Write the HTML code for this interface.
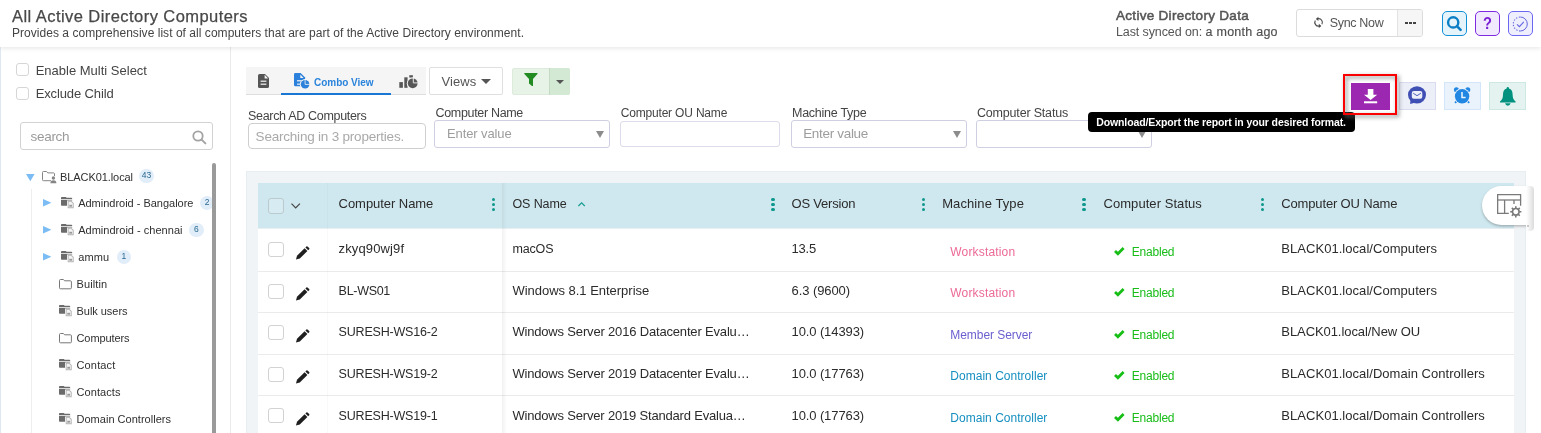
<!DOCTYPE html>
<html>
<head>
<meta charset="utf-8">
<title>All Active Directory Computers</title>
<style>
*{box-sizing:border-box;margin:0;padding:0}
html,body{width:1541px;height:433px;overflow:hidden;background:#fff;font-family:"Liberation Sans",sans-serif;color:#333}
.t,.q{position:absolute;white-space:nowrap;line-height:1}
#tx{position:absolute;left:0;top:0;width:1541px;height:433px;will-change:opacity;z-index:30}
.a{position:absolute}
svg{position:absolute;overflow:visible}
#hdr{position:absolute;left:0;top:0;width:1541px;height:47px;background:#fff;box-shadow:0 1px 5px rgba(0,0,0,.11);z-index:5}
#side{position:absolute;left:0;top:47px;width:231px;height:386px;background:#fff;border-right:1px solid #e9eaeb;border-left:1px solid #dfe8f0}
.cb{position:absolute;width:13px;height:13px;border:1.5px solid #d6d6d6;border-radius:3px;background:#fff}
.bd{position:absolute;width:14.4px;height:14.4px;border-radius:8px;background:#e1edf9;color:#2a6890;font-size:8.5px;line-height:13.6px;text-align:center;z-index:2;will-change:opacity}
.inp{position:absolute;border:1px solid #cfcfe2;border-radius:3px;background:#fff}
.dd{position:absolute;width:0;height:0;border-left:4.3px solid transparent;border-right:4.3px solid transparent;border-top:7px solid #8c8c8c}
.row{position:absolute;left:258px;width:1256px;border-top:1px solid #ebebeb}
.rcb{position:absolute;left:268px;width:16px;height:15px;border:1px solid #d2d2d2;border-radius:3px;background:#fff;z-index:3}
.dots{position:absolute;width:3px;height:13px;z-index:3}
.dots i{position:absolute;left:-0.2px;width:3.4px;height:3.4px;border-radius:1.7px;background:#0d978b}
</style>
</head>
<body>
<div id="hdr"></div>
<div id="side"></div>
<!-- header controls -->
<div class="a" style="left:1296px;top:9px;width:127px;height:28px;border:1px solid #dcdcdc;border-radius:3px;background:#fff;z-index:6"></div>
<div class="a" style="left:1397px;top:10px;width:25px;height:26px;border-left:1px solid #e2e2e2;background:#f6f6f6;border-radius:0 2px 2px 0;z-index:6"></div>
<div class="a" style="left:1405px;top:22px;width:11px;height:2px;z-index:7"><i class="a" style="left:0;top:0;width:2.6px;height:2.2px;background:#444"></i><i class="a" style="left:4px;top:0;width:2.6px;height:2.2px;background:#444"></i><i class="a" style="left:8px;top:0;width:2.6px;height:2.2px;background:#444"></i></div>
<div class="a" style="left:1442px;top:11px;width:25px;height:25px;border:1px solid #1190d6;border-radius:5px;background:#e5f3fb;z-index:6"></div>
<div class="a" style="left:1475px;top:11px;width:25px;height:25px;border:1px solid #7f29e0;border-radius:5px;background:#f1e9fd;z-index:6"></div>
<div class="a" style="left:1508px;top:11px;width:25px;height:25px;border:1px solid #6c66f2;border-radius:5px;background:#efeefd;z-index:6"></div>
<!-- sidebar -->
<div class="cb" style="left:16px;top:63px"></div>
<div class="cb" style="left:16px;top:87px"></div>
<div class="a" style="left:20px;top:122px;width:193px;height:28px;border:1px solid #d2d2d2;border-radius:3px;background:#fff"></div>
<div class="a" style="left:30.5px;top:189px;width:1px;height:244px;background:#eeeeee"></div>
<div class="a" style="left:212.2px;top:163px;width:3.8px;height:275px;background:#9a9a9a;border-radius:2px;z-index:4"></div>
<div class="bd" style="left:139.4px;top:169px">43</div>
<div class="bd" style="left:200px;top:195.8px">2</div>
<div class="bd" style="left:189.2px;top:222.8px">6</div>
<div class="bd" style="left:116.6px;top:249.8px">1</div>
<!-- toolbar -->
<div class="a" style="left:246px;top:67px;width:180px;height:28px;background:#f5f5f5;border-bottom:1px solid #dedede"></div>
<div class="a" style="left:281px;top:93px;width:110px;height:2px;background:#1976d2"></div>
<div class="a" style="left:429px;top:67px;width:74px;height:28px;border:1px solid #dfdfdf;border-radius:2px;background:#fff"></div>
<div class="a" style="left:481px;top:79.3px;width:0;height:0;border-left:5px solid transparent;border-right:5px solid transparent;border-top:5px solid #555"></div>
<div class="a" style="left:512px;top:68px;width:58px;height:27px;background:#e8f3e8;border-radius:2px;border:1px solid #dcebdc"></div>
<div class="a" style="left:549px;top:68px;width:21px;height:27px;background:#d3e9d3;border-left:1px solid #c2dbc2;border-radius:0 2px 2px 0"></div>
<div class="a" style="left:556px;top:80px;width:0;height:0;border-left:4px solid transparent;border-right:4px solid transparent;border-top:4.5px solid #555"></div>
<!-- filter inputs -->
<div class="inp" style="left:248px;top:123px;width:178px;height:26px;border-color:#cfcfcf;border-radius:4px"></div>
<div class="inp" style="left:434px;top:120px;width:176px;height:28px"></div><div class="dd" style="left:595.6px;top:131px"></div>
<div class="inp" style="left:620px;top:120.5px;width:159.5px;height:26.5px;border-color:#dcdcea"></div>
<div class="inp" style="left:791px;top:120px;width:176px;height:28px"></div><div class="dd" style="left:952.6px;top:131px"></div>
<div class="inp" style="left:976px;top:120px;width:176px;height:28px"></div><div class="dd" style="left:1137.6px;top:131px"></div>
<!-- action buttons -->
<div class="a" style="left:1343px;top:74px;width:54px;height:41px;border:2px solid #fa0000;filter:drop-shadow(2px 2px 2px rgba(110,116,114,.9));z-index:25"></div>
<div class="a" style="left:1351px;top:83px;width:39px;height:27px;background:#9c27b0;z-index:9"></div>
<div class="a" style="left:1398.5px;top:82px;width:37px;height:27.5px;background:#eceef8;border:1px solid #d9dbf0;z-index:7"></div>
<div class="a" style="left:1444px;top:82px;width:37px;height:27.5px;background:#eaf3fc;border:1px solid #d3e5f8"></div>
<div class="a" style="left:1489px;top:82px;width:37px;height:27.5px;background:#e5f3f0;border:1px solid #cde8e2"></div>
<!-- tooltip -->
<div class="a" style="left:1088px;top:112px;width:267px;height:20px;background:#000;border-radius:4px;z-index:19"></div>
<!-- table -->
<div class="a" style="left:246px;top:171px;width:1280px;height:262px;background:#f0f4f7;border:1px solid #e7eef2;border-bottom:0"></div>
<div class="a" style="left:258px;top:183px;width:1256px;height:250px;background:#fff"></div>
<div class="a" style="left:258px;top:183px;width:1256px;height:44.5px;background:#cfe8ef;z-index:2"></div>
<div class="a" style="left:258px;top:227.5px;width:1256px;height:1.5px;background:#e7eef1;z-index:2"></div>
<div class="row" style="top:271px;height:1px"></div>
<div class="row" style="top:312px;height:1px"></div>
<div class="row" style="top:354px;height:1px"></div>
<div class="row" style="top:395px;height:1px"></div>
<div class="a" style="left:502px;top:183px;width:5px;height:250px;background:linear-gradient(to right,rgba(0,0,0,.055),rgba(0,0,0,.03) 40%,rgba(0,0,0,0));z-index:3"></div>
<div class="a" style="left:326.5px;top:183px;width:1px;height:250px;background:rgba(0,0,0,.022);z-index:3"></div>
<div class="rcb" style="top:198.3px;height:15.5px;background:#d6ecf2;border:1.5px solid #bcc9cd"></div>
<div class="rcb" style="top:242.4px"></div>
<div class="rcb" style="top:283.9px"></div>
<div class="rcb" style="top:325.4px"></div>
<div class="rcb" style="top:366.9px"></div>
<div class="rcb" style="top:408.4px"></div>
<div class="dots" style="left:492px;top:198px"><i style="top:0"></i><i style="top:4.8px"></i><i style="top:9.6px"></i></div>
<div class="dots" style="left:771.3px;top:198px"><i style="top:0"></i><i style="top:4.8px"></i><i style="top:9.6px"></i></div>
<div class="dots" style="left:921.8px;top:198px"><i style="top:0"></i><i style="top:4.8px"></i><i style="top:9.6px"></i></div>
<div class="dots" style="left:1082.5px;top:198px"><i style="top:0"></i><i style="top:4.8px"></i><i style="top:9.6px"></i></div>
<div class="dots" style="left:1261px;top:198px"><i style="top:0"></i><i style="top:4.8px"></i><i style="top:9.6px"></i></div>
<!-- column settings pill -->

<div class="a" style="left:1481.7px;top:185.6px;width:46px;height:39px;background:#fff;border-radius:19.5px 0 0 19.5px;box-shadow:0 1.5px 2.5px rgba(0,0,0,.25);z-index:4"></div>
<div class="a" style="left:1526px;top:185.6px;width:7.8px;height:45px;background:linear-gradient(to right,#fff 0%,#f4f4f4 35%,#dcdcdc 100%);border-radius:0 4px 4px 0;z-index:4"></div>
<div class="a" style="left:1526.8px;top:224.6px;width:2.6px;height:2.6px;border-radius:2px;background:#b9b9b9;z-index:5"></div>
<!-- ICONS -->
<!-- sync icon -->
<svg style="left:1313px;top:16px;z-index:7" width="12" height="13" viewBox="0 0 12 13"><g fill="none" stroke="#4a4a4a" stroke-width="1.15"><path d="M4.9 2.7 A3.8 3.8 0 0 1 8.9 8.3"/><path d="M6.3 10.1 A3.8 3.8 0 0 1 2.3 4.5"/></g><path d="M2.8 2.9 L5.4 0.8 V4.9Z" fill="#4a4a4a"/><path d="M8.4 9.9 L5.8 7.8 V12Z" fill="#4a4a4a"/></svg>
<!-- header magnifier -->
<svg style="left:1445px;top:14px;z-index:7" width="18" height="18" viewBox="0 0 18 18"><circle cx="8.2" cy="8.4" r="5.1" fill="none" stroke="#0b7fc6" stroke-width="2.4"/><path d="M11.9 12.2 L15.6 15.9" stroke="#0b7fc6" stroke-width="2.6" stroke-linecap="round"/></svg>
<!-- check circle -->
<svg style="left:1512px;top:16px;z-index:7" width="16" height="16" viewBox="0 0 16 16"><path d="M8.3 1 A7 7 0 0 1 8.3 15" fill="none" stroke="#6466e0" stroke-width="1"/><path d="M8.3 15 A7 7 0 0 1 8.3 1" fill="none" stroke="#6466e0" stroke-width="1.1" stroke-dasharray="1.3 1.6"/><path d="M5 8.3 L7.4 10.6 L11.8 5.8" fill="none" stroke="#6466e0" stroke-width="1.1"/></svg>
<!-- sidebar magnifier -->
<svg style="left:191.5px;top:129.5px" width="15" height="15" viewBox="0 0 15 15"><circle cx="6" cy="6" r="4.7" fill="none" stroke="#a3a3a3" stroke-width="1.8"/><path d="M9.6 9.6 L13.4 13.4" stroke="#a3a3a3" stroke-width="2" stroke-linecap="round"/></svg>
<!-- toolbar doc icon -->
<svg style="left:258px;top:74px" width="11" height="14" viewBox="0 0 11 14"><path d="M1.6 0 H7 L11 4 V12.4 Q11 14 9.4 14 H1.6 Q0 14 0 12.4 V1.6 Q0 0 1.6 0Z" fill="#555"/><path d="M6.6 0.8 V4.4 H10.2Z" fill="#f5f5f5"/><rect x="2.6" y="6.6" width="5.8" height="1.2" fill="#f5f5f5"/><rect x="2.6" y="9.6" width="5.8" height="1.2" fill="#f5f5f5"/></svg>
<!-- combo icon -->
<svg style="left:294px;top:73px" width="16" height="16" viewBox="0 0 16 16"><path d="M1.4 0 H6.6 L11.1 4.5 V13.3 H1.4 Q0 13.3 0 11.9 V1.4 Q0 0 1.4 0Z" fill="#2a80da"/><path d="M6.3 1.6 V4.9 H9.6Z" fill="#f5f5f5"/><rect x="3" y="7.2" width="4.6" height="1.2" fill="#f5f5f5"/><rect x="3" y="10.6" width="3" height="1.1" fill="#f5f5f5"/><circle cx="11.1" cy="11.2" r="5.3" fill="#f5f5f5"/><circle cx="11.1" cy="11.2" r="4.3" fill="#2a80da"/><path d="M11.1 6 V11.4 H16" fill="none" stroke="#f5f5f5" stroke-width="0.8"/></svg>
<!-- chart icon -->
<svg style="left:399px;top:75px" width="19" height="14" viewBox="0 0 19 14"><rect x="0.3" y="7.1" width="3.6" height="5.7" fill="#585858"/><rect x="5.3" y="2.3" width="3.3" height="10.5" fill="#585858"/><rect x="10.3" y="0.2" width="3.6" height="2.4" fill="#585858"/><circle cx="13.7" cy="8.3" r="5.9" fill="#f5f5f5"/><circle cx="13.7" cy="8.3" r="4.9" fill="#585858"/><path d="M14.3 2.5 V7.9 H19.3" fill="none" stroke="#f5f5f5" stroke-width="0.9"/></svg>
<!-- funnel -->
<svg style="left:524px;top:73.4px" width="14" height="13" viewBox="0 0 14 13"><path d="M0.6 0 H13.2 Q14 0.4 13.4 1.1 L9 6 V13 H8 L5 10.6 V6 L0.4 1.1 Q-0.2 0.4 0.6 0Z" fill="#228b22"/></svg>
<!-- download icon -->
<svg style="left:1363.8px;top:88.8px;z-index:10" width="13.2" height="14.4" viewBox="0 0 13.2 14.4"><path d="M3.8 0 H9.4 V5.8 H13.2 L6.6 11 L0 5.8 H3.8Z" fill="#fff"/><rect x="0" y="12.3" width="13.2" height="2" fill="#fff"/></svg>
<!-- chat icon -->
<svg style="left:1408px;top:85px;z-index:8" width="19" height="20" viewBox="0 0 19 20"><ellipse cx="9" cy="9.8" rx="9" ry="8.6" fill="#3f4fb4"/><path d="M2.6 14 L2.1 19 L7.4 17.4Z" fill="#3f4fb4"/><rect x="3.8" y="5.9" width="10.5" height="7.8" rx="2" fill="#eceef8"/><path d="M5.2 8.2 L9 10.7 L12.9 8.2" fill="none" stroke="#3f4fb4" stroke-width="0.9"/></svg>
<!-- alarm icon -->
<svg style="left:1453px;top:86px" width="18" height="18" viewBox="0 0 18 18"><circle cx="3.4" cy="3.8" r="2.5" fill="#2187e2"/><circle cx="14.8" cy="3.8" r="2.5" fill="#2187e2"/><path d="M3.6 15.2 L2.6 16.3 M14.6 15.2 L15.6 16.3" stroke="#2187e2" stroke-width="2" stroke-linecap="round"/><circle cx="9.1" cy="10.3" r="8.1" fill="#eaf3fc"/><circle cx="9.1" cy="10.3" r="7.2" fill="#2187e2"/><path d="M9 6 V11.4 H12.6" fill="none" stroke="#eef6fd" stroke-width="1.5"/></svg>
<!-- bell icon -->
<svg style="left:1499.8px;top:86.6px" width="16" height="19" viewBox="0 0 16 19"><path d="M7.8 0 Q9 0 9 1.4 Q12.6 2.6 12.6 7.4 Q12.6 12.2 15.6 14.4 V15.4 H0 V14.4 Q3 12.2 3 7.4 Q3 2.6 6.6 1.4 Q6.6 0 7.8 0Z" fill="#00917f"/><path d="M5 16.3 H10.6 Q10 18.7 7.8 18.7 Q5.6 18.7 5 16.3Z" fill="#00917f"/></svg>
<!-- tooltip arrow none -->
<!-- tree icons -->
<svg style="left:26.4px;top:174.2px" width="8.6" height="7.2" viewBox="0 0 8.6 7.2"><path d="M0 0 H8.6 L4.3 7.2Z" fill="#7bbcf5"/></svg>
<svg style="left:43.4px;top:199.2px" width="8.4" height="7.6" viewBox="0 0 8.4 7.6"><path d="M0 0 L8.4 3.8 L0 7.6Z" fill="#7bbcf5"/></svg>
<svg style="left:43.4px;top:226.2px" width="8.4" height="7.6" viewBox="0 0 8.4 7.6"><path d="M0 0 L8.4 3.8 L0 7.6Z" fill="#7bbcf5"/></svg>
<svg style="left:43.4px;top:253.2px" width="8.4" height="7.6" viewBox="0 0 8.4 7.6"><path d="M0 0 L8.4 3.8 L0 7.6Z" fill="#7bbcf5"/></svg>
<!-- root folder/person icon -->
<svg style="left:42px;top:171px" width="15" height="13" viewBox="0 0 15 13"><path d="M9 9.7 H1.4 Q0.5 9.7 0.5 8.8 V1.4 Q0.5 0.5 1.4 0.5 H4.6 L5.8 1.9 H11.6 Q12.5 1.9 12.5 2.8 V5" fill="none" stroke="#858585" stroke-width="1"/><circle cx="11.4" cy="7" r="1.7" fill="#858585"/><path d="M8.4 12.2 Q8.4 9.3 11.4 9.3 Q14.4 9.3 14.4 12.2Z" fill="#858585"/></svg>
<svg style="left:61px;top:197.3px" width="13" height="12" viewBox="0 0 13 12"><path d="M0.8 0 H4.8 L5.6 0.8 H10.4 Q11.2 0.8 11.2 1.6 V1.9 H0 V0.8 Q0 0 0.8 0Z" fill="#6b6b6b"/><path d="M0 2.7 H11.2 V3.4 H6 V8.8 H0.8 Q0 8.8 0 8Z" fill="#6b6b6b"/><path d="M6.7 3.9 H10.5 L12.7 6.1 V11.2 H6.7Z" fill="#b2b2b2"/><path d="M7.6 4.8 H10 L11.8 6.6 V10.3 H7.6Z" fill="#f4f4f4"/><rect x="8.3" y="7.8" width="2.8" height="1.9" fill="#9a9a9a"/></svg>
<svg style="left:61px;top:224.3px" width="13" height="12" viewBox="0 0 13 12"><path d="M0.8 0 H4.8 L5.6 0.8 H10.4 Q11.2 0.8 11.2 1.6 V1.9 H0 V0.8 Q0 0 0.8 0Z" fill="#6b6b6b"/><path d="M0 2.7 H11.2 V3.4 H6 V8.8 H0.8 Q0 8.8 0 8Z" fill="#6b6b6b"/><path d="M6.7 3.9 H10.5 L12.7 6.1 V11.2 H6.7Z" fill="#b2b2b2"/><path d="M7.6 4.8 H10 L11.8 6.6 V10.3 H7.6Z" fill="#f4f4f4"/><rect x="8.3" y="7.8" width="2.8" height="1.9" fill="#9a9a9a"/></svg>
<svg style="left:61px;top:251.3px" width="13" height="12" viewBox="0 0 13 12"><path d="M0.8 0 H4.8 L5.6 0.8 H10.4 Q11.2 0.8 11.2 1.6 V1.9 H0 V0.8 Q0 0 0.8 0Z" fill="#6b6b6b"/><path d="M0 2.7 H11.2 V3.4 H6 V8.8 H0.8 Q0 8.8 0 8Z" fill="#6b6b6b"/><path d="M6.7 3.9 H10.5 L12.7 6.1 V11.2 H6.7Z" fill="#b2b2b2"/><path d="M7.6 4.8 H10 L11.8 6.6 V10.3 H7.6Z" fill="#f4f4f4"/><rect x="8.3" y="7.8" width="2.8" height="1.9" fill="#9a9a9a"/></svg>
<svg style="left:58.8px;top:278.6px" width="13" height="11" viewBox="0 0 13 11"><path d="M1.5 0.5 H4.4 L5.6 1.8 H11.4 Q12.4 1.8 12.4 2.8 V8.8 Q12.4 9.8 11.4 9.8 H1.5 Q0.5 9.8 0.5 8.8 V1.5 Q0.5 0.5 1.5 0.5Z" fill="none" stroke="#777" stroke-width="1"/></svg>
<svg style="left:58.8px;top:305.0px" width="13" height="12" viewBox="0 0 13 12"><path d="M0.8 0 H4.8 L5.6 0.8 H10.4 Q11.2 0.8 11.2 1.6 V1.9 H0 V0.8 Q0 0 0.8 0Z" fill="#6b6b6b"/><path d="M0 2.7 H11.2 V3.4 H6 V8.8 H0.8 Q0 8.8 0 8Z" fill="#6b6b6b"/><path d="M6.7 3.9 H10.5 L12.7 6.1 V11.2 H6.7Z" fill="#b2b2b2"/><path d="M7.6 4.8 H10 L11.8 6.6 V10.3 H7.6Z" fill="#f4f4f4"/><rect x="8.3" y="7.8" width="2.8" height="1.9" fill="#9a9a9a"/></svg>
<svg style="left:58.8px;top:332.6px" width="13" height="11" viewBox="0 0 13 11"><path d="M1.5 0.5 H4.4 L5.6 1.8 H11.4 Q12.4 1.8 12.4 2.8 V8.8 Q12.4 9.8 11.4 9.8 H1.5 Q0.5 9.8 0.5 8.8 V1.5 Q0.5 0.5 1.5 0.5Z" fill="none" stroke="#777" stroke-width="1"/></svg>
<svg style="left:58.8px;top:359.0px" width="13" height="12" viewBox="0 0 13 12"><path d="M0.8 0 H4.8 L5.6 0.8 H10.4 Q11.2 0.8 11.2 1.6 V1.9 H0 V0.8 Q0 0 0.8 0Z" fill="#6b6b6b"/><path d="M0 2.7 H11.2 V3.4 H6 V8.8 H0.8 Q0 8.8 0 8Z" fill="#6b6b6b"/><path d="M6.7 3.9 H10.5 L12.7 6.1 V11.2 H6.7Z" fill="#b2b2b2"/><path d="M7.6 4.8 H10 L11.8 6.6 V10.3 H7.6Z" fill="#f4f4f4"/><rect x="8.3" y="7.8" width="2.8" height="1.9" fill="#9a9a9a"/></svg>
<svg style="left:58.8px;top:386.0px" width="13" height="12" viewBox="0 0 13 12"><path d="M0.8 0 H4.8 L5.6 0.8 H10.4 Q11.2 0.8 11.2 1.6 V1.9 H0 V0.8 Q0 0 0.8 0Z" fill="#6b6b6b"/><path d="M0 2.7 H11.2 V3.4 H6 V8.8 H0.8 Q0 8.8 0 8Z" fill="#6b6b6b"/><path d="M6.7 3.9 H10.5 L12.7 6.1 V11.2 H6.7Z" fill="#b2b2b2"/><path d="M7.6 4.8 H10 L11.8 6.6 V10.3 H7.6Z" fill="#f4f4f4"/><rect x="8.3" y="7.8" width="2.8" height="1.9" fill="#9a9a9a"/></svg>
<svg style="left:58.8px;top:413.0px" width="13" height="12" viewBox="0 0 13 12"><path d="M0.8 0 H4.8 L5.6 0.8 H10.4 Q11.2 0.8 11.2 1.6 V1.9 H0 V0.8 Q0 0 0.8 0Z" fill="#6b6b6b"/><path d="M0 2.7 H11.2 V3.4 H6 V8.8 H0.8 Q0 8.8 0 8Z" fill="#6b6b6b"/><path d="M6.7 3.9 H10.5 L12.7 6.1 V11.2 H6.7Z" fill="#b2b2b2"/><path d="M7.6 4.8 H10 L11.8 6.6 V10.3 H7.6Z" fill="#f4f4f4"/><rect x="8.3" y="7.8" width="2.8" height="1.9" fill="#9a9a9a"/></svg>
<svg style="left:291px;top:203px;z-index:3" width="9.4" height="6" viewBox="0 0 9.4 6"><path d="M0.5 0.6 L4.7 5 L8.9 0.6" fill="none" stroke="#444" stroke-width="1.2"/></svg>
<svg style="left:577.6px;top:202px;z-index:3" width="7.2" height="4.4" viewBox="0 0 7.2 4.4"><path d="M0.4 4 L3.6 0.8 L6.8 4" fill="none" stroke="#159b8f" stroke-width="1.2"/></svg>
<svg style="left:1497px;top:194px;z-index:5" width="25" height="24" viewBox="0 0 25 24"><g fill="none" stroke="#7a7a7a" stroke-width="1.3"><path d="M11.8 19.4 H0.65 V0.65 H23.6 V11.8"/><path d="M0.65 6 H23.6"/><path d="M7.6 6 V19.4"/><path d="M17 6 V10"/></g><g transform="translate(18.8,17.8)"><circle r="3.3" fill="none" stroke="#7a7a7a" stroke-width="1.7"/><g stroke="#7a7a7a" stroke-width="1.6"><path d="M0 -3.6 V-5.6M0 3.6 V5.6M-3.6 0 H-5.6M3.6 0 H5.6M2.55 2.55 L3.95 3.95M-2.55 2.55 L-3.95 3.95M2.55 -2.55 L3.95 -3.95M-2.55 -2.55 L-3.95 -3.95"/></g></g></svg>
<svg style="left:295.6px;top:245.8px;z-index:3" width="14" height="14" viewBox="0 0 14 14"><path d="M0 13.6 L1 9.8 L8.6 2.2 L11.4 5 L3.8 12.6Z" fill="#1f1f1f"/><path d="M9.4 1.4 L10.4 0.4 Q10.9 -0.1 11.5 0.4 L13.2 2.1 Q13.7 2.7 13.2 3.2 L12.2 4.2Z" fill="#1f1f1f"/></svg>
<svg style="left:1113.6px;top:246.9px" width="10.6" height="8.2" viewBox="0 0 10.6 8.2"><path d="M1 4 L3.9 6.7 L9.6 1" fill="none" stroke="#16be16" stroke-width="2.8"/></svg>
<svg style="left:295.6px;top:287.3px;z-index:3" width="14" height="14" viewBox="0 0 14 14"><path d="M0 13.6 L1 9.8 L8.6 2.2 L11.4 5 L3.8 12.6Z" fill="#1f1f1f"/><path d="M9.4 1.4 L10.4 0.4 Q10.9 -0.1 11.5 0.4 L13.2 2.1 Q13.7 2.7 13.2 3.2 L12.2 4.2Z" fill="#1f1f1f"/></svg>
<svg style="left:1113.6px;top:288.4px" width="10.6" height="8.2" viewBox="0 0 10.6 8.2"><path d="M1 4 L3.9 6.7 L9.6 1" fill="none" stroke="#16be16" stroke-width="2.8"/></svg>
<svg style="left:295.6px;top:328.8px;z-index:3" width="14" height="14" viewBox="0 0 14 14"><path d="M0 13.6 L1 9.8 L8.6 2.2 L11.4 5 L3.8 12.6Z" fill="#1f1f1f"/><path d="M9.4 1.4 L10.4 0.4 Q10.9 -0.1 11.5 0.4 L13.2 2.1 Q13.7 2.7 13.2 3.2 L12.2 4.2Z" fill="#1f1f1f"/></svg>
<svg style="left:1113.6px;top:329.9px" width="10.6" height="8.2" viewBox="0 0 10.6 8.2"><path d="M1 4 L3.9 6.7 L9.6 1" fill="none" stroke="#16be16" stroke-width="2.8"/></svg>
<svg style="left:295.6px;top:370.3px;z-index:3" width="14" height="14" viewBox="0 0 14 14"><path d="M0 13.6 L1 9.8 L8.6 2.2 L11.4 5 L3.8 12.6Z" fill="#1f1f1f"/><path d="M9.4 1.4 L10.4 0.4 Q10.9 -0.1 11.5 0.4 L13.2 2.1 Q13.7 2.7 13.2 3.2 L12.2 4.2Z" fill="#1f1f1f"/></svg>
<svg style="left:1113.6px;top:371.4px" width="10.6" height="8.2" viewBox="0 0 10.6 8.2"><path d="M1 4 L3.9 6.7 L9.6 1" fill="none" stroke="#16be16" stroke-width="2.8"/></svg>
<svg style="left:295.6px;top:411.8px;z-index:3" width="14" height="14" viewBox="0 0 14 14"><path d="M0 13.6 L1 9.8 L8.6 2.2 L11.4 5 L3.8 12.6Z" fill="#1f1f1f"/><path d="M9.4 1.4 L10.4 0.4 Q10.9 -0.1 11.5 0.4 L13.2 2.1 Q13.7 2.7 13.2 3.2 L12.2 4.2Z" fill="#1f1f1f"/></svg>
<svg style="left:1113.6px;top:412.9px" width="10.6" height="8.2" viewBox="0 0 10.6 8.2"><path d="M1 4 L3.9 6.7 L9.6 1" fill="none" stroke="#16be16" stroke-width="2.8"/></svg>

<div id="tx"><span class="t" style="left:12.00px;top:8.00px;font-size:16.5px;color:#484848;z-index:6;-webkit-text-stroke:0.25px #484848;letter-spacing:0.439px;">All Active Directory Computers</span>
<span class="t" style="left:12.00px;top:27.00px;font-size:12px;color:#444;z-index:6;letter-spacing:0.039px;">Provides a comprehensive list of all computers that are part of the Active Directory environment.</span>
<span class="t" style="left:1116.00px;top:9.00px;font-size:13.5px;color:#555;z-index:6;-webkit-text-stroke:0.5px #555;letter-spacing:0.295px;">Active Directory Data</span>
<span class="t" style="left:1116.00px;top:26.00px;font-size:12.5px;color:#555;z-index:6;letter-spacing:-0.104px;">Last synced on:</span>
<span class="t" style="left:1205.60px;top:26.00px;font-size:12.5px;color:#505050;z-index:6;-webkit-text-stroke:0.18px #505050;letter-spacing:0.245px;">a month ago</span>
<span class="t" style="left:1329.70px;top:17.00px;font-size:12.5px;color:#555;z-index:7;letter-spacing:-0.323px;">Sync Now</span>
<span class="t" style="left:35.70px;top:64.00px;font-size:13px;color:#444;letter-spacing:0.001px;">Enable Multi Select</span>
<span class="t" style="left:35.70px;top:87.00px;font-size:13px;color:#444;letter-spacing:-0.123px;">Exclude Child</span>
<span class="t" style="left:30.50px;top:130.00px;font-size:13.5px;color:#9a9a9a;letter-spacing:-0.289px;">search</span>
<span class="t" style="left:60.00px;top:172.00px;font-size:11px;color:#2f2f2f;letter-spacing:-0.077px;">BLACK01.local</span>
<span class="t" style="left:78.20px;top:198.00px;font-size:11px;color:#2f2f2f;letter-spacing:-0.013px;">Admindroid - Bangalore</span>
<span class="t" style="left:78.20px;top:225.00px;font-size:11px;color:#2f2f2f;letter-spacing:0.017px;">Admindroid - chennai</span>
<span class="t" style="left:78.20px;top:252.00px;font-size:11px;color:#2f2f2f;letter-spacing:0.109px;">ammu</span>
<span class="t" style="left:76.50px;top:279.00px;font-size:11px;color:#2f2f2f;letter-spacing:0.104px;">Builtin</span>
<span class="t" style="left:76.50px;top:306.00px;font-size:11px;color:#2f2f2f;letter-spacing:-0.036px;">Bulk users</span>
<span class="t" style="left:76.50px;top:333.00px;font-size:11px;color:#2f2f2f;letter-spacing:-0.089px;">Computers</span>
<span class="t" style="left:76.50px;top:360.00px;font-size:11px;color:#2f2f2f;letter-spacing:0.154px;">Contact</span>
<span class="t" style="left:76.50px;top:387.00px;font-size:11px;color:#2f2f2f;letter-spacing:0.072px;">Contacts</span>
<span class="t" style="left:76.50px;top:414.00px;font-size:11px;color:#2f2f2f;letter-spacing:0.019px;">Domain Controllers</span>
<span class="t" style="left:314.10px;top:78.00px;font-size:10px;color:#2a84dc;font-weight:bold;letter-spacing:-0.033px;">Combo View</span>
<span class="t" style="left:441.50px;top:75.00px;font-size:13px;color:#555;letter-spacing:0.049px;">Views</span>
<span class="t" style="left:248.00px;top:110.00px;font-size:12.5px;color:#444;letter-spacing:-0.314px;">Search AD Computers</span>
<span class="t" style="left:255.60px;top:130.00px;font-size:13.5px;color:#a9a9a9;letter-spacing:-0.209px;">Searching in 3 properties.</span>
<span class="t" style="left:435.50px;top:107.00px;font-size:12.5px;color:#444;letter-spacing:-0.323px;">Computer Name</span>
<span class="t" style="left:447.00px;top:127.00px;font-size:13.0px;color:#9d9d9d;letter-spacing:-0.115px;">Enter value</span>
<span class="t" style="left:620.70px;top:107.00px;font-size:12.0px;color:#444;letter-spacing:-0.180px;">Computer OU Name</span>
<span class="t" style="left:792.00px;top:107.00px;font-size:12.5px;color:#444;letter-spacing:-0.259px;">Machine Type</span>
<span class="t" style="left:803.20px;top:127.00px;font-size:13.5px;color:#9d9d9d;letter-spacing:-0.318px;">Enter value</span>
<span class="t" style="left:977.00px;top:107.00px;font-size:12.5px;color:#444;letter-spacing:-0.186px;">Computer Status</span>
<span class="t" style="left:1096.20px;top:117.00px;font-size:10.5px;color:#fff;font-weight:bold;z-index:20;letter-spacing:-0.105px;">Download/Export the report in your desired format.</span>
<span class="t" style="left:338.60px;top:197.00px;font-size:13px;color:#2b2b2b;letter-spacing:-0.052px;">Computer Name</span>
<span class="t" style="left:512.40px;top:198.00px;font-size:12.5px;color:#2b2b2b;letter-spacing:-0.099px;">OS Name</span>
<span class="t" style="left:791.50px;top:197.00px;font-size:13px;color:#2b2b2b;letter-spacing:-0.207px;">OS Version</span>
<span class="t" style="left:942.20px;top:197.00px;font-size:13px;color:#2b2b2b;letter-spacing:0.091px;">Machine Type</span>
<span class="t" style="left:1103.50px;top:197.00px;font-size:13px;color:#2b2b2b;letter-spacing:0.057px;">Computer Status</span>
<span class="t" style="left:1281.30px;top:197.00px;font-size:13px;color:#2b2b2b;letter-spacing:-0.155px;">Computer OU Name</span>
<span class="t" style="left:338.60px;top:242.00px;font-size:13px;color:#2b2b2b;z-index:3;letter-spacing:0.129px;">zkyq90wj9f</span>
<span class="t" style="left:512.40px;top:243.00px;font-size:12.5px;color:#2b2b2b;letter-spacing:-0.138px;">macOS</span>
<span class="t" style="left:791.50px;top:242.00px;font-size:13px;color:#2b2b2b;letter-spacing:-0.203px;">13.5</span>
<span class="t" style="left:950.30px;top:246.00px;font-size:12px;color:#ec6a96;letter-spacing:0.169px;">Workstation</span>
<span class="t" style="left:1131.80px;top:246.00px;font-size:12px;color:#19bd19;letter-spacing:-0.221px;">Enabled</span>
<span class="t" style="left:1281.30px;top:242.00px;font-size:13px;color:#2b2b2b;letter-spacing:0.046px;">BLACK01.local/Computers</span>
<span class="t" style="left:338.60px;top:285.00px;font-size:12.5px;color:#2b2b2b;z-index:3;letter-spacing:-0.300px;">BL-WS01</span>
<span class="t" style="left:512.40px;top:284.00px;font-size:13px;color:#2b2b2b;letter-spacing:-0.022px;">Windows 8.1 Enterprise</span>
<span class="t" style="left:791.50px;top:284.00px;font-size:13px;color:#2b2b2b;letter-spacing:-0.077px;">6.3 (9600)</span>
<span class="t" style="left:950.30px;top:287.00px;font-size:12px;color:#ec6a96;letter-spacing:0.169px;">Workstation</span>
<span class="t" style="left:1131.80px;top:287.00px;font-size:12px;color:#19bd19;letter-spacing:-0.221px;">Enabled</span>
<span class="t" style="left:1281.30px;top:284.00px;font-size:13px;color:#2b2b2b;letter-spacing:0.046px;">BLACK01.local/Computers</span>
<span class="t" style="left:338.60px;top:326.00px;font-size:12.5px;color:#2b2b2b;z-index:3;letter-spacing:-0.202px;">SURESH-WS16-2</span>
<span class="t" style="left:512.40px;top:325.00px;font-size:13px;color:#2b2b2b;letter-spacing:-0.173px;">Windows Server 2016 Datacenter Evalu…</span>
<span class="t" style="left:791.50px;top:325.00px;font-size:13px;color:#2b2b2b;letter-spacing:-0.103px;">10.0 (14393)</span>
<span class="t" style="left:950.30px;top:329.00px;font-size:12px;color:#6a5fcf;letter-spacing:-0.053px;">Member Server</span>
<span class="t" style="left:1131.80px;top:329.00px;font-size:12px;color:#19bd19;letter-spacing:-0.221px;">Enabled</span>
<span class="t" style="left:1281.30px;top:325.00px;font-size:13px;color:#2b2b2b;letter-spacing:-0.074px;">BLACK01.local/New OU</span>
<span class="t" style="left:338.60px;top:368.00px;font-size:12.5px;color:#2b2b2b;z-index:3;letter-spacing:-0.202px;">SURESH-WS19-2</span>
<span class="t" style="left:512.40px;top:367.00px;font-size:13px;color:#2b2b2b;letter-spacing:-0.173px;">Windows Server 2019 Datacenter Evalu…</span>
<span class="t" style="left:791.50px;top:367.00px;font-size:13px;color:#2b2b2b;letter-spacing:-0.103px;">10.0 (17763)</span>
<span class="t" style="left:950.30px;top:370.00px;font-size:12px;color:#168fc0;letter-spacing:0.023px;">Domain Controller</span>
<span class="t" style="left:1131.80px;top:370.00px;font-size:12px;color:#19bd19;letter-spacing:-0.221px;">Enabled</span>
<span class="t" style="left:1281.30px;top:367.00px;font-size:13px;color:#2b2b2b;letter-spacing:0.040px;">BLACK01.local/Domain Controllers</span>
<span class="t" style="left:338.60px;top:410.00px;font-size:12.5px;color:#2b2b2b;z-index:3;letter-spacing:-0.202px;">SURESH-WS19-1</span>
<span class="t" style="left:512.40px;top:409.00px;font-size:13px;color:#2b2b2b;letter-spacing:-0.184px;">Windows Server 2019 Standard Evalua…</span>
<span class="t" style="left:791.50px;top:409.00px;font-size:13px;color:#2b2b2b;letter-spacing:-0.103px;">10.0 (17763)</span>
<span class="t" style="left:950.30px;top:412.00px;font-size:12px;color:#168fc0;letter-spacing:0.023px;">Domain Controller</span>
<span class="t" style="left:1131.80px;top:412.00px;font-size:12px;color:#19bd19;letter-spacing:-0.221px;">Enabled</span>
<span class="t" style="left:1281.30px;top:409.00px;font-size:13px;color:#2b2b2b;letter-spacing:0.040px;">BLACK01.local/Domain Controllers</span>
<span class="q" style="left:1482.7px;top:15px;font-size:17px;font-weight:bold;color:#7a1fd6;z-index:7;transform:scaleX(.86);transform-origin:0 0">?</span></div>
</body>
</html>
